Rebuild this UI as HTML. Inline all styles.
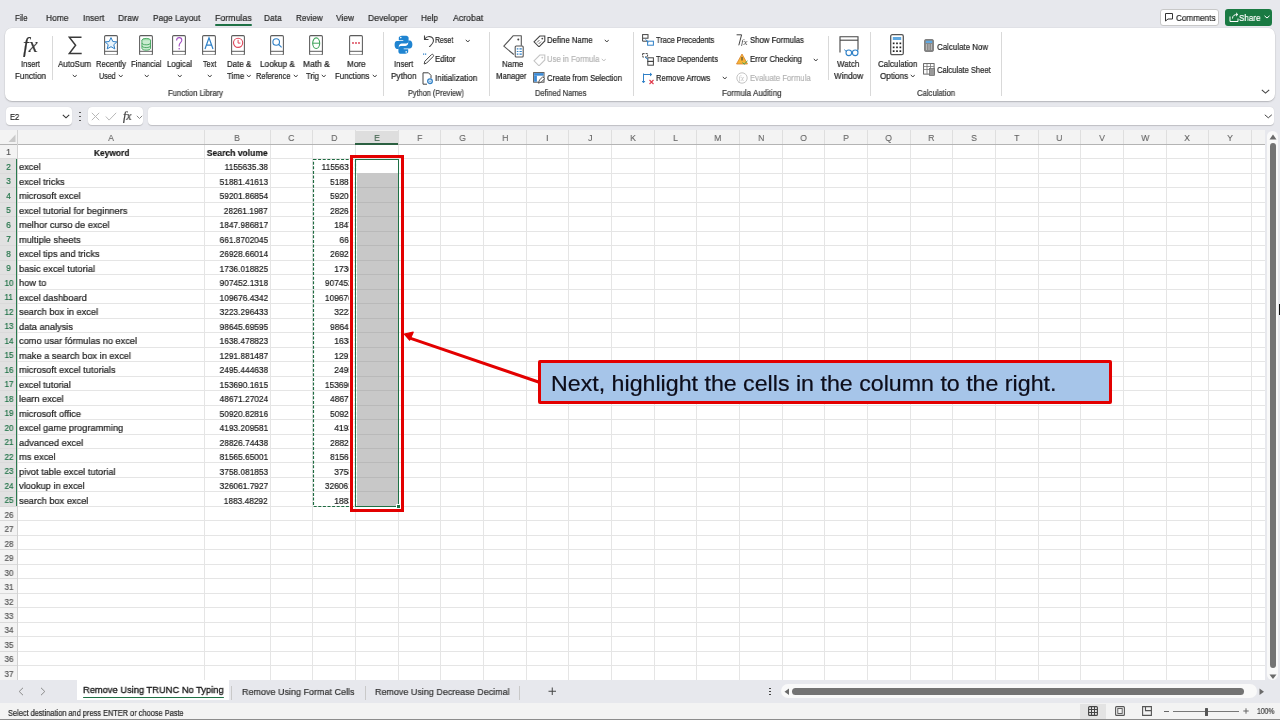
<!DOCTYPE html>
<html><head><meta charset="utf-8"><style>
html,body{margin:0;padding:0;width:1280px;height:720px;overflow:hidden;position:relative;background:#e9ebee}
body>div{position:absolute}
.t{position:absolute;white-space:pre;font-family:"Liberation Sans",sans-serif;will-change:transform;-webkit-text-stroke:0.22px currentColor}
</style></head><body>
<div style="left:0px;top:0px;width:1280px;height:720px;background:#e7e8ed"></div>
<div class="t" style="left:14.50px;top:13.36px;font-size:9.74px;line-height:9.74px;color:#2b2b2b;transform:scaleX(0.7966);transform-origin:0 0;">File</div>
<div class="t" style="left:45.60px;top:13.36px;font-size:9.74px;line-height:9.74px;color:#2b2b2b;transform:scaleX(0.8661);transform-origin:0 0;">Home</div>
<div class="t" style="left:82.50px;top:13.36px;font-size:9.74px;line-height:9.74px;color:#2b2b2b;transform:scaleX(0.8725);transform-origin:0 0;">Insert</div>
<div class="t" style="left:117.75px;top:13.36px;font-size:9.74px;line-height:9.74px;color:#2b2b2b;transform:scaleX(0.8955);transform-origin:0 0;">Draw</div>
<div class="t" style="left:152.50px;top:13.36px;font-size:9.74px;line-height:9.74px;color:#2b2b2b;transform:scaleX(0.8649);transform-origin:0 0;">Page Layout</div>
<div class="t" style="left:214.50px;top:13.36px;font-size:9.74px;line-height:9.74px;color:#2b2b2b;transform:scaleX(0.9055);transform-origin:0 0;">Formulas</div>
<div class="t" style="left:264.20px;top:13.36px;font-size:9.74px;line-height:9.74px;color:#2b2b2b;transform:scaleX(0.8605);transform-origin:0 0;">Data</div>
<div class="t" style="left:296.25px;top:13.36px;font-size:9.74px;line-height:9.74px;color:#2b2b2b;transform:scaleX(0.8315);transform-origin:0 0;">Review</div>
<div class="t" style="left:336.00px;top:13.36px;font-size:9.74px;line-height:9.74px;color:#2b2b2b;transform:scaleX(0.8599);transform-origin:0 0;">View</div>
<div class="t" style="left:367.50px;top:13.36px;font-size:9.74px;line-height:9.74px;color:#2b2b2b;transform:scaleX(0.8876);transform-origin:0 0;">Developer</div>
<div class="t" style="left:421.00px;top:13.36px;font-size:9.74px;line-height:9.74px;color:#2b2b2b;transform:scaleX(0.8538);transform-origin:0 0;">Help</div>
<div class="t" style="left:452.90px;top:13.36px;font-size:9.74px;line-height:9.74px;color:#2b2b2b;transform:scaleX(0.8998);transform-origin:0 0;">Acrobat</div>
<div style="left:214.5px;top:24px;width:37px;height:2px;background:#1e7145;border-radius:1px"></div>
<div style="left:1159.7px;top:8.8px;width:59px;height:17px;background:#fff;border:1px solid #c8c8c8;border-radius:3px;box-sizing:border-box"></div>
<svg style="position:absolute;left:1164px;top:12px;" width="10" height="10" viewBox="0 0 10 10"><path d="M1.5 1.5h7v5.5h-4.5l-2.5 2v-2h0z" fill="none" stroke="#333" stroke-width="1"/></svg>
<div class="t" style="left:1175.50px;top:12.80px;font-size:9.45px;line-height:9.45px;color:#2b2b2b;transform:scaleX(0.8648);transform-origin:0 0;">Comments</div>
<div style="left:1225px;top:8.8px;width:47px;height:17px;background:#1a7a43;border-radius:3px"></div>
<svg style="position:absolute;left:1228px;top:11px;" width="12" height="12" viewBox="0 0 12 12"><path d="M2 5.5v5h8v-3" fill="none" stroke="#fff" stroke-width="1"/><path d="M4.5 7.5c0-3 2-4 5-4M8 1.8l1.8 1.7-1.8 1.7" fill="none" stroke="#fff" stroke-width="1"/></svg>
<div class="t" style="left:1239.00px;top:12.80px;font-size:9.45px;line-height:9.45px;color:#fff;transform:scaleX(0.8528);transform-origin:0 0;">Share</div>
<svg style="position:absolute;left:1264px;top:15px;" width="6" height="4" viewBox="0 0 6 4"><path d="M0.5 0.8l2.5 2.2 2.5-2.2" fill="none" stroke="#fff" stroke-width="1"/></svg>
<div style="left:5px;top:28px;width:1269.5px;height:73px;background:#fff;border-radius:7px;box-shadow:0 1px 1.5px rgba(0,0,0,0.2),0 0 0 0.5px rgba(0,0,0,0.05)"></div>
<div style="left:52.0px;top:36px;width:1px;height:44px;background:#d9d9d9"></div>
<div style="left:383.25px;top:32px;width:1px;height:64px;background:#d9d9d9"></div>
<div style="left:488.5px;top:32px;width:1px;height:64px;background:#d9d9d9"></div>
<div style="left:633.0px;top:32px;width:1px;height:64px;background:#d9d9d9"></div>
<div style="left:828.2px;top:36px;width:1px;height:44px;background:#d9d9d9"></div>
<div style="left:869.8px;top:32px;width:1px;height:64px;background:#d9d9d9"></div>
<div style="left:1001.1px;top:32px;width:1px;height:64px;background:#d9d9d9"></div>
<div class="t" style="left:22.60px;top:35.27px;font-size:20.35px;line-height:20.35px;color:#333;transform:scaleX(0.9919);transform-origin:0 0;font-family:'Liberation Serif',serif;font-style:italic;">fx</div>
<div class="t" style="left:20.80px;top:60.25px;font-size:9.16px;line-height:9.16px;color:#242424;transform:scaleX(0.8296);transform-origin:0 0;">Insert</div>
<div class="t" style="left:14.90px;top:71.65px;font-size:9.16px;line-height:9.16px;color:#242424;transform:scaleX(0.8827);transform-origin:0 0;">Function</div>
<svg style="position:absolute;left:67.5px;top:35.5px;" width="15" height="19" viewBox="0 0 15 19"><path d="M13.5 1.2H1.3L7.6 9.2 1.3 17.6h12.4" fill="none" stroke="#3a3a3a" stroke-width="1.5" stroke-linejoin="miter"/></svg>
<div class="t" style="left:58.00px;top:60.25px;font-size:9.16px;line-height:9.16px;color:#242424;transform:scaleX(0.8788);transform-origin:0 0;">AutoSum</div>
<svg style="position:absolute;left:71.9px;top:74.4px;" width="5" height="4" viewBox="0 0 5 4"><path d="M0.8 0.8l2.00 2.2 2.00-2.2" fill="none" stroke="#444" stroke-width="1"/></svg>
<svg style="position:absolute;left:104px;top:34.6px;" width="14" height="20.5" viewBox="0 0 14 20.5"><rect x="0.6" y="0.6" width="12.8" height="19.3" rx="1.1" fill="#fff" stroke="#5c5c5c" stroke-width="1.05"/><line x1="0.6" y1="16.3" x2="13.4" y2="16.3" stroke="#5c5c5c" stroke-width="1"/><path d="M7 2.6l1.8 3.9 4.1 0.4-3.1 2.8 1 4.2L7 11.7l-3.8 2.2 1-4.2-3.1-2.8 4.1-0.4z" fill="#eaf4fb" stroke="#2f80c7" stroke-width="1"/></svg>
<div class="t" style="left:96.00px;top:60.25px;font-size:9.16px;line-height:9.16px;color:#242424;transform:scaleX(0.8421);transform-origin:0 0;">Recently</div>
<div class="t" style="left:98.80px;top:71.65px;font-size:9.16px;line-height:9.16px;color:#242424;transform:scaleX(0.7765);transform-origin:0 0;">Used</div>
<svg style="position:absolute;left:118.1px;top:74.4px;" width="5" height="4" viewBox="0 0 5 4"><path d="M0.8 0.8l2.00 2.2 2.00-2.2" fill="none" stroke="#444" stroke-width="1"/></svg>
<svg style="position:absolute;left:139.1px;top:34.6px;" width="14" height="20.5" viewBox="0 0 14 20.5"><rect x="0.6" y="0.6" width="12.8" height="19.3" rx="1.1" fill="#fff" stroke="#5c5c5c" stroke-width="1.05"/><line x1="0.6" y1="16.3" x2="13.4" y2="16.3" stroke="#5c5c5c" stroke-width="1"/><ellipse cx="7.2" cy="5.2" rx="4.3" ry="1.8" fill="#9ddba8" stroke="#3fa35a" stroke-width="0.9"/><path d="M2.9 5.2v8.2c0 1 1.9 1.8 4.3 1.8s4.3-.8 4.3-1.8V5.2" fill="#c9ecd0" stroke="#3fa35a" stroke-width="0.9"/><path d="M2.9 8c0 1 1.9 1.8 4.3 1.8S11.5 9 11.5 8M2.9 10.8c0 1 1.9 1.8 4.3 1.8s4.3-.8 4.3-1.8" fill="none" stroke="#3fa35a" stroke-width="0.9"/></svg>
<div class="t" style="left:131.00px;top:60.25px;font-size:9.16px;line-height:9.16px;color:#242424;transform:scaleX(0.8377);transform-origin:0 0;">Financial</div>
<svg style="position:absolute;left:143.8px;top:74.4px;" width="5" height="4" viewBox="0 0 5 4"><path d="M0.8 0.8l2.00 2.2 2.00-2.2" fill="none" stroke="#444" stroke-width="1"/></svg>
<svg style="position:absolute;left:172px;top:34.6px;" width="14" height="20.5" viewBox="0 0 14 20.5"><rect x="0.6" y="0.6" width="12.8" height="19.3" rx="1.1" fill="#fff" stroke="#5c5c5c" stroke-width="1.05"/><line x1="0.6" y1="16.3" x2="13.4" y2="16.3" stroke="#5c5c5c" stroke-width="1"/><path d="M4.6 5.6c0-2 1.2-3 2.6-3s2.6 1 2.6 2.7c0 2.2-2.6 2.4-2.6 4.9v1.2" fill="none" stroke="#a34fc2" stroke-width="1.1"/><circle cx="7.2" cy="13.8" r="0.8" fill="#a34fc2"/></svg>
<div class="t" style="left:166.90px;top:60.25px;font-size:9.16px;line-height:9.16px;color:#242424;transform:scaleX(0.8615);transform-origin:0 0;">Logical</div>
<svg style="position:absolute;left:176.5px;top:74.4px;" width="5" height="4" viewBox="0 0 5 4"><path d="M0.8 0.8l2.00 2.2 2.00-2.2" fill="none" stroke="#444" stroke-width="1"/></svg>
<svg style="position:absolute;left:202px;top:34.6px;" width="14" height="20.5" viewBox="0 0 14 20.5"><rect x="0.6" y="0.6" width="12.8" height="19.3" rx="1.1" fill="#fff" stroke="#5c5c5c" stroke-width="1.05"/><line x1="0.6" y1="16.3" x2="13.4" y2="16.3" stroke="#5c5c5c" stroke-width="1"/><path d="M3 14L7 2.8 11 14M4.4 10.2h5.2" fill="none" stroke="#2f80c7" stroke-width="1.2"/></svg>
<div class="t" style="left:202.50px;top:60.25px;font-size:9.16px;line-height:9.16px;color:#242424;transform:scaleX(0.7920);transform-origin:0 0;">Text</div>
<svg style="position:absolute;left:206.5px;top:74.4px;" width="5" height="4" viewBox="0 0 5 4"><path d="M0.8 0.8l2.00 2.2 2.00-2.2" fill="none" stroke="#444" stroke-width="1"/></svg>
<svg style="position:absolute;left:231.4px;top:34.6px;" width="14" height="20.5" viewBox="0 0 14 20.5"><rect x="0.6" y="0.6" width="12.8" height="19.3" rx="1.1" fill="#fff" stroke="#5c5c5c" stroke-width="1.05"/><line x1="0.6" y1="16.3" x2="13.4" y2="16.3" stroke="#5c5c5c" stroke-width="1"/><circle cx="7.1" cy="7.8" r="4.6" fill="none" stroke="#e0475a" stroke-width="1.1"/><path d="M7.1 4.8v3.3h2.3" fill="none" stroke="#e0475a" stroke-width="1"/></svg>
<div class="t" style="left:226.70px;top:60.25px;font-size:9.16px;line-height:9.16px;color:#242424;transform:scaleX(0.8645);transform-origin:0 0;">Date &amp;</div>
<div class="t" style="left:226.70px;top:71.65px;font-size:9.16px;line-height:9.16px;color:#242424;transform:scaleX(0.8596);transform-origin:0 0;">Time</div>
<svg style="position:absolute;left:245.6px;top:74.4px;" width="5" height="4" viewBox="0 0 5 4"><path d="M0.8 0.8l2.00 2.2 2.00-2.2" fill="none" stroke="#444" stroke-width="1"/></svg>
<svg style="position:absolute;left:270px;top:34.6px;" width="14" height="20.5" viewBox="0 0 14 20.5"><rect x="0.6" y="0.6" width="12.8" height="19.3" rx="1.1" fill="#fff" stroke="#5c5c5c" stroke-width="1.05"/><line x1="0.6" y1="16.3" x2="13.4" y2="16.3" stroke="#5c5c5c" stroke-width="1"/><circle cx="6.2" cy="7" r="3.3" fill="none" stroke="#2f80c7" stroke-width="1.1"/><path d="M8.6 9.4l3 3" stroke="#2f80c7" stroke-width="1.2"/></svg>
<div class="t" style="left:259.50px;top:60.25px;font-size:9.16px;line-height:9.16px;color:#242424;transform:scaleX(0.9020);transform-origin:0 0;">Lookup &amp;</div>
<div class="t" style="left:256.40px;top:71.65px;font-size:9.16px;line-height:9.16px;color:#242424;transform:scaleX(0.8142);transform-origin:0 0;">Reference</div>
<svg style="position:absolute;left:293.0px;top:74.4px;" width="5" height="4" viewBox="0 0 5 4"><path d="M0.8 0.8l2.00 2.2 2.00-2.2" fill="none" stroke="#444" stroke-width="1"/></svg>
<svg style="position:absolute;left:309.2px;top:34.6px;" width="14" height="20.5" viewBox="0 0 14 20.5"><rect x="0.6" y="0.6" width="12.8" height="19.3" rx="1.1" fill="#fff" stroke="#5c5c5c" stroke-width="1.05"/><line x1="0.6" y1="16.3" x2="13.4" y2="16.3" stroke="#5c5c5c" stroke-width="1"/><ellipse cx="7.2" cy="8.2" rx="3.5" ry="5.3" fill="none" stroke="#3fa35a" stroke-width="1.1"/><path d="M3.7 8.2h7" stroke="#3fa35a" stroke-width="1"/></svg>
<div class="t" style="left:302.80px;top:60.25px;font-size:9.16px;line-height:9.16px;color:#242424;transform:scaleX(0.9204);transform-origin:0 0;">Math &amp;</div>
<div class="t" style="left:306.40px;top:71.65px;font-size:9.16px;line-height:9.16px;color:#242424;transform:scaleX(0.8425);transform-origin:0 0;">Trig</div>
<svg style="position:absolute;left:321.1px;top:74.4px;" width="5" height="4" viewBox="0 0 5 4"><path d="M0.8 0.8l2.00 2.2 2.00-2.2" fill="none" stroke="#444" stroke-width="1"/></svg>
<svg style="position:absolute;left:348.6px;top:34.6px;" width="14" height="20.5" viewBox="0 0 14 20.5"><rect x="0.6" y="0.6" width="12.8" height="19.3" rx="1.1" fill="#fff" stroke="#5c5c5c" stroke-width="1.05"/><line x1="0.6" y1="16.3" x2="13.4" y2="16.3" stroke="#5c5c5c" stroke-width="1"/><circle cx="4" cy="8" r="0.9" fill="#d9364a"/><circle cx="7" cy="8" r="0.9" fill="#d9364a"/><circle cx="10" cy="8" r="0.9" fill="#d9364a"/></svg>
<div class="t" style="left:346.70px;top:60.25px;font-size:9.16px;line-height:9.16px;color:#242424;transform:scaleX(0.8915);transform-origin:0 0;">More</div>
<div class="t" style="left:335.00px;top:71.65px;font-size:9.16px;line-height:9.16px;color:#242424;transform:scaleX(0.8665);transform-origin:0 0;">Functions</div>
<svg style="position:absolute;left:371.5px;top:74.4px;" width="5" height="4" viewBox="0 0 5 4"><path d="M0.8 0.8l2.00 2.2 2.00-2.2" fill="none" stroke="#444" stroke-width="1"/></svg>
<div class="t" style="left:168.10px;top:90.45px;font-size:8.21px;line-height:8.21px;color:#3a3a3a;transform:scaleX(0.9341);transform-origin:0 0;">Function Library</div>
<svg style="position:absolute;left:393.5px;top:34.5px;" width="19" height="19.5" viewBox="0 0 19 19.5"><path d="M9.2 0.8c-4.2 0-4.4 1.8-4.4 1.8v2.6h4.5v0.8H3C1.4 6 0.6 7.6 0.6 9.9s1 4 2.5 4h1.7v-2.4c0-1.6 1.4-3 3-3h4.4c1.3 0 2.4-1.1 2.4-2.4V2.8c0-1.2-1.1-2-2.4-2.1z" fill="#1f84d1"/><circle cx="6.8" cy="2.6" r="0.8" fill="#fff"/><path d="M9.8 18.7c4.2 0 4.4-1.8 4.4-1.8v-2.6H9.7v-.8H16c1.6 0 2.4-1.6 2.4-3.9s-1-4-2.5-4h-1.7V8c0 1.6-1.4 3-3 3H6.8c-1.3 0-2.4 1.1-2.4 2.4v3.3c0 1.2 1.1 2 2.4 2.1z" fill="#1f84d1"/><circle cx="12.2" cy="16.9" r="0.8" fill="#fff"/></svg>
<div class="t" style="left:393.80px;top:60.25px;font-size:9.16px;line-height:9.16px;color:#242424;transform:scaleX(0.8427);transform-origin:0 0;">Insert</div>
<div class="t" style="left:390.60px;top:71.65px;font-size:9.16px;line-height:9.16px;color:#242424;transform:scaleX(0.8980);transform-origin:0 0;">Python</div>
<svg style="position:absolute;left:421.5px;top:34px;" width="13" height="13" viewBox="0 0 13 13"><path d="M2.5 1.5v4h4" fill="none" stroke="#444" stroke-width="1.1"/><path d="M2.6 5.2C4 3.3 5.8 2.4 7.6 2.6c2.4.3 4 2.3 3.8 4.6-.2 1.6-1.2 2.8-3 4.6l-1.2 1.1" fill="none" stroke="#444" stroke-width="1.1"/></svg>
<div class="t" style="left:435.25px;top:36.05px;font-size:9.16px;line-height:9.16px;color:#242424;transform:scaleX(0.7629);transform-origin:0 0;">Reset</div>
<svg style="position:absolute;left:465.2px;top:38.5px;" width="5" height="4" viewBox="0 0 5 4"><path d="M0.8 0.8l2.00 2.2 2.00-2.2" fill="none" stroke="#444" stroke-width="1"/></svg>
<svg style="position:absolute;left:421.5px;top:53px;" width="13" height="12" viewBox="0 0 13 12"><path d="M2.2 11l.6-2.7 6.6-6.6c.5-.5 1.3-.5 1.8 0s.5 1.3 0 1.8L4.6 10.1z" fill="none" stroke="#444" stroke-width="1"/><path d="M1 1.2h1.2M3 1.2h1.2" stroke="#2f80c7" stroke-width="1.2"/></svg>
<div class="t" style="left:435.25px;top:54.85px;font-size:9.16px;line-height:9.16px;color:#242424;transform:scaleX(0.8570);transform-origin:0 0;">Editor</div>
<svg style="position:absolute;left:422px;top:71.5px;" width="12" height="13" viewBox="0 0 12 13"><path d="M1 .8h5.5l2.5 2.6v3M1 .8v11.4h4" fill="none" stroke="#444" stroke-width="1"/><circle cx="8" cy="9.2" r="2.3" fill="none" stroke="#2f80c7" stroke-width="1.3"/><circle cx="8" cy="9.2" r="0.7" fill="#2f80c7"/></svg>
<div class="t" style="left:435.25px;top:73.55px;font-size:9.16px;line-height:9.16px;color:#242424;transform:scaleX(0.8830);transform-origin:0 0;">Initialization</div>
<div class="t" style="left:408.40px;top:90.45px;font-size:8.21px;line-height:8.21px;color:#3a3a3a;transform:scaleX(0.8940);transform-origin:0 0;">Python (Preview)</div>
<svg style="position:absolute;left:502.5px;top:33.5px;" width="21" height="24" viewBox="0 0 21 24"><path d="M10.8 20.5L0.8 12.2 10.3 1.7h8v10" fill="none" stroke="#555" stroke-width="1.1" stroke-linejoin="round"/><circle cx="15.3" cy="5.4" r="1" fill="#444"/><rect x="12.2" y="12" width="8" height="11" rx="1" fill="#fff" stroke="#555" stroke-width="1.1"/><path d="M13.8 14.8h1.6M16.5 14.8h2.3M13.8 17.5h1.6M16.5 17.5h2.3M13.8 20.2h1.6M16.5 20.2h2.3" stroke="#2f80c7" stroke-width="1.2"/></svg>
<div class="t" style="left:501.50px;top:60.25px;font-size:9.16px;line-height:9.16px;color:#242424;transform:scaleX(0.8720);transform-origin:0 0;">Name</div>
<div class="t" style="left:496.20px;top:71.65px;font-size:9.16px;line-height:9.16px;color:#242424;transform:scaleX(0.8439);transform-origin:0 0;">Manager</div>
<svg style="position:absolute;left:533px;top:34.5px;" width="13" height="12" viewBox="0 0 13 12"><path d="M1 6.8l5.8-5.8h5v5l-5.8 5.8z" fill="none" stroke="#444" stroke-width="1.1"/><circle cx="9.3" cy="3.6" r="0.9" fill="#444"/><path d="M4 7.5l2.5-2.5M5.6 9l2.4-2.4" stroke="#444" stroke-width="0.8"/></svg>
<div class="t" style="left:547.00px;top:36.05px;font-size:9.16px;line-height:9.16px;color:#242424;transform:scaleX(0.8552);transform-origin:0 0;">Define Name</div>
<svg style="position:absolute;left:603.5px;top:38.5px;" width="5" height="4" viewBox="0 0 5 4"><path d="M0.8 0.8l2.00 2.2 2.00-2.2" fill="none" stroke="#444" stroke-width="1"/></svg>
<svg style="position:absolute;left:533px;top:53.5px;" width="13" height="12" viewBox="0 0 13 12"><path d="M1 6.8l5.8-5.8h5v5l-5.8 5.8z" fill="none" stroke="#c4c4c4" stroke-width="1.1"/><circle cx="9.3" cy="3.6" r="0.9" fill="#c4c4c4"/></svg>
<div class="t" style="left:547.00px;top:54.85px;font-size:9.16px;line-height:9.16px;color:#b4b4b4;transform:scaleX(0.8440);transform-origin:0 0;">Use in Formula</div>
<svg style="position:absolute;left:600.9px;top:57.5px;" width="5" height="4" viewBox="0 0 5 4"><path d="M0.8 0.8l2.00 2.2 2.00-2.2" fill="none" stroke="#c0c0c0" stroke-width="1"/></svg>
<svg style="position:absolute;left:532.5px;top:71.5px;" width="12" height="12" viewBox="0 0 12 12"><rect x="0.6" y="0.6" width="10.4" height="9.6" fill="#fff" stroke="#555" stroke-width="1"/><rect x="1.1" y="1.1" width="9.4" height="2.6" fill="#3b8ad6"/><rect x="1.1" y="3.7" width="2.8" height="6" fill="#3b8ad6"/><path d="M5.5 11.2l1-3.2 3.2-3.2 1.9 1.9-3.2 3.2z" fill="#fff" stroke="#444" stroke-width="0.9"/></svg>
<div class="t" style="left:547.00px;top:73.55px;font-size:9.16px;line-height:9.16px;color:#242424;transform:scaleX(0.8469);transform-origin:0 0;">Create from Selection</div>
<div class="t" style="left:535.40px;top:90.45px;font-size:8.21px;line-height:8.21px;color:#3a3a3a;transform:scaleX(0.9081);transform-origin:0 0;">Defined Names</div>
<svg style="position:absolute;left:641.5px;top:34px;" width="12" height="12" viewBox="0 0 12 12"><rect x="0.6" y="0.6" width="5.4" height="3.6" fill="none" stroke="#444" stroke-width="1"/><path d="M0.6 4.2v3h5" fill="none" stroke="#444" stroke-width="1"/><rect x="5.6" y="7.2" width="5.8" height="4" fill="none" stroke="#2f80c7" stroke-width="1"/><path d="M3.5 5.5l3 2.6" stroke="#2f80c7" stroke-width="1"/></svg>
<div class="t" style="left:656.00px;top:36.05px;font-size:9.16px;line-height:9.16px;color:#242424;transform:scaleX(0.8105);transform-origin:0 0;">Trace Precedents</div>
<svg style="position:absolute;left:641.5px;top:52.5px;" width="12" height="13" viewBox="0 0 12 13"><path d="M0.6 0.6h5v3.4h-5z" fill="none" stroke="#444" stroke-width="1" stroke-dasharray="2 1"/><rect x="5.8" y="4.8" width="5.6" height="3.6" fill="none" stroke="#444" stroke-width="1"/><rect x="5.8" y="8.4" width="5.6" height="3.8" fill="none" stroke="#444" stroke-width="1"/><path d="M3 4.2l3.2 2.4" stroke="#2f80c7" stroke-width="1"/></svg>
<div class="t" style="left:656.00px;top:54.85px;font-size:9.16px;line-height:9.16px;color:#242424;transform:scaleX(0.8267);transform-origin:0 0;">Trace Dependents</div>
<svg style="position:absolute;left:641.5px;top:71.5px;" width="13" height="13" viewBox="0 0 13 13"><path d="M1.5 1.5v9M1.5 2.5h8M8 1l1.8 1.5L8 4M0 9l1.5 1.8L3 9" fill="none" stroke="#2f80c7" stroke-width="1"/><path d="M7.5 8l4 4M11.5 8l-4 4" stroke="#e0384a" stroke-width="1.1"/></svg>
<div class="t" style="left:656.00px;top:73.55px;font-size:9.16px;line-height:9.16px;color:#242424;transform:scaleX(0.8387);transform-origin:0 0;">Remove Arrows</div>
<svg style="position:absolute;left:721.8px;top:75.9px;" width="5" height="4" viewBox="0 0 5 4"><path d="M0.8 0.8l2.00 2.2 2.00-2.2" fill="none" stroke="#444" stroke-width="1"/></svg>
<svg style="position:absolute;left:735.5px;top:34px;" width="13" height="12" viewBox="0 0 13 12"><path d="M0.6 0.8h5l-2.8 10.5" fill="none" stroke="#444" stroke-width="1"/><text x="5" y="10.5" font-family="Liberation Serif" font-style="italic" font-size="9" fill="#444">fx</text></svg>
<div class="t" style="left:749.80px;top:36.05px;font-size:9.16px;line-height:9.16px;color:#242424;transform:scaleX(0.8473);transform-origin:0 0;">Show Formulas</div>
<svg style="position:absolute;left:736px;top:52.5px;" width="13" height="12" viewBox="0 0 13 12"><path d="M6 1L11.5 11H0.5z" fill="#f5b335" stroke="#d9822b" stroke-width="0.8"/><path d="M6 4v3.5" stroke="#333" stroke-width="1"/><path d="M6.5 9.5l1.7 1.7 3.3-3.3" fill="none" stroke="#3fa35a" stroke-width="1"/></svg>
<div class="t" style="left:749.80px;top:54.85px;font-size:9.16px;line-height:9.16px;color:#242424;transform:scaleX(0.8482);transform-origin:0 0;">Error Checking</div>
<svg style="position:absolute;left:813.0px;top:57.5px;" width="5" height="4" viewBox="0 0 5 4"><path d="M0.8 0.8l2.00 2.2 2.00-2.2" fill="none" stroke="#444" stroke-width="1"/></svg>
<svg style="position:absolute;left:736px;top:71.5px;" width="12" height="12" viewBox="0 0 12 12"><circle cx="6" cy="6" r="5.2" fill="none" stroke="#c4c4c4" stroke-width="1"/><text x="2.6" y="8.8" font-family="Liberation Serif" font-style="italic" font-size="7.5" fill="#c0c0c0">fx</text></svg>
<div class="t" style="left:749.80px;top:73.55px;font-size:9.16px;line-height:9.16px;color:#b4b4b4;transform:scaleX(0.8444);transform-origin:0 0;">Evaluate Formula</div>
<div class="t" style="left:722.40px;top:90.45px;font-size:8.21px;line-height:8.21px;color:#3a3a3a;transform:scaleX(0.9672);transform-origin:0 0;">Formula Auditing</div>
<svg style="position:absolute;left:838.5px;top:36px;" width="21" height="21" viewBox="0 0 21 21"><path d="M1 16.5V0.8h18v13" fill="none" stroke="#444" stroke-width="1.1"/><path d="M1 4.2h18" stroke="#444" stroke-width="1.1"/><circle cx="9.8" cy="16.8" r="2.8" fill="#fff" stroke="#2f80c7" stroke-width="1.1"/><circle cx="16.2" cy="16.8" r="2.8" fill="#fff" stroke="#2f80c7" stroke-width="1.1"/><path d="M12.6 16.3h0.8M7 15.5l-1.5-2M19 15.5l-.5-2" stroke="#2f80c7" stroke-width="1"/></svg>
<div class="t" style="left:837.20px;top:60.25px;font-size:9.16px;line-height:9.16px;color:#242424;transform:scaleX(0.8707);transform-origin:0 0;">Watch</div>
<div class="t" style="left:834.10px;top:71.65px;font-size:9.16px;line-height:9.16px;color:#242424;transform:scaleX(0.8935);transform-origin:0 0;">Window</div>
<svg style="position:absolute;left:890px;top:34px;" width="14" height="21.5" viewBox="0 0 14 21.5"><rect x="0.7" y="0.7" width="12.6" height="20" rx="1.5" fill="#fff" stroke="#555" stroke-width="1.3"/><rect x="2.8" y="3" width="8.4" height="3" fill="#5fa8e0"/><g fill="#222"><rect x="2.8" y="8.5" width="1.7" height="1.7"/><rect x="6.15" y="8.5" width="1.7" height="1.7"/><rect x="9.5" y="8.5" width="1.7" height="1.7"/><rect x="2.8" y="12.5" width="1.7" height="1.7"/><rect x="6.15" y="12.5" width="1.7" height="1.7"/><rect x="9.5" y="12.5" width="1.7" height="1.7"/><rect x="2.8" y="16.3" width="1.7" height="1.7"/><rect x="6.15" y="16.3" width="1.7" height="1.7"/><rect x="9.5" y="16.3" width="1.7" height="1.7"/></g></svg>
<div class="t" style="left:877.50px;top:60.25px;font-size:9.16px;line-height:9.16px;color:#242424;transform:scaleX(0.8697);transform-origin:0 0;">Calculation</div>
<div class="t" style="left:880.00px;top:71.65px;font-size:9.16px;line-height:9.16px;color:#242424;transform:scaleX(0.8904);transform-origin:0 0;">Options</div>
<svg style="position:absolute;left:910.0px;top:74.4px;" width="5" height="4" viewBox="0 0 5 4"><path d="M0.8 0.8l2.00 2.2 2.00-2.2" fill="none" stroke="#444" stroke-width="1"/></svg>
<svg style="position:absolute;left:923.5px;top:39px;" width="10" height="13" viewBox="0 0 10 13"><rect x="0.6" y="0.6" width="8.8" height="11.8" rx="1" fill="#8a8a8a" stroke="#666" stroke-width="0.8"/><rect x="1.8" y="1.8" width="6.4" height="2.2" fill="#5fa8e0"/><path d="M2.5 5.5v5.5M5 5.5v5.5M7.5 5.5v5.5" stroke="#fff" stroke-width="0.8" stroke-dasharray="1 1"/></svg>
<div class="t" style="left:936.90px;top:41.53px;font-size:9.88px;line-height:9.88px;color:#242424;transform:scaleX(0.8019);transform-origin:0 0;">Calculate Now</div>
<svg style="position:absolute;left:922.5px;top:62.5px;" width="12" height="13" viewBox="0 0 12 13"><rect x="0.6" y="0.6" width="10.5" height="10.5" fill="none" stroke="#555" stroke-width="0.9"/><path d="M0.6 3.5h10.5M0.6 6.5h10.5M4 0.6v10.5M7.5 0.6v10.5" stroke="#777" stroke-width="0.8"/><rect x="6.5" y="5.5" width="5" height="7" fill="#9a9a9a" stroke="#666" stroke-width="0.7"/></svg>
<div class="t" style="left:936.90px;top:64.83px;font-size:9.88px;line-height:9.88px;color:#242424;transform:scaleX(0.7696);transform-origin:0 0;">Calculate Sheet</div>
<div class="t" style="left:916.90px;top:90.45px;font-size:8.21px;line-height:8.21px;color:#3a3a3a;transform:scaleX(0.9378);transform-origin:0 0;">Calculation</div>
<svg style="position:absolute;left:1260.5px;top:88.5px;" width="9" height="5" viewBox="0 0 9 5"><path d="M0.8 0.8l3.7 3.3 3.7-3.3" fill="none" stroke="#444" stroke-width="1.1"/></svg>
<div style="left:6px;top:107px;width:66.2px;height:17.9px;background:#fff;border-radius:4px;box-shadow:0 0.6px 1px rgba(0,0,0,0.18)"></div>
<div class="t" style="left:10.20px;top:111.88px;font-size:9.88px;line-height:9.88px;color:#222;transform:scaleX(0.7693);transform-origin:0 0;">E2</div>
<svg style="position:absolute;left:62px;top:114px;" width="8" height="5" viewBox="0 0 8 5"><path d="M0.8 0.8l3.2 3 3.2-3" fill="none" stroke="#333" stroke-width="1.1"/></svg>
<div style="left:79.4px;top:112.2px;width:1.3px;height:1.3px;background:#555;border-radius:0.3px"></div>
<div style="left:79.4px;top:116.1px;width:1.3px;height:1.3px;background:#555;border-radius:0.3px"></div>
<div style="left:79.4px;top:120px;width:1.3px;height:1.3px;background:#555;border-radius:0.3px"></div>
<div style="left:87.5px;top:107px;width:55.5px;height:17.9px;background:#fff;border-radius:4px;box-shadow:0 0.6px 1px rgba(0,0,0,0.18)"></div>
<svg style="position:absolute;left:91px;top:111.5px;" width="9" height="9" viewBox="0 0 9 9"><path d="M0.8 0.8l7.4 7.4M8.2 0.8L0.8 8.2" stroke="#b8b8b8" stroke-width="1"/></svg>
<svg style="position:absolute;left:105px;top:111.5px;" width="12" height="9" viewBox="0 0 12 9"><path d="M0.8 4.5l3.3 3.6L11.2 0.8" fill="none" stroke="#b8b8b8" stroke-width="1"/></svg>
<div class="t" style="left:123.40px;top:110.04px;font-size:12.35px;line-height:12.35px;color:#333;transform:scaleX(0.9365);transform-origin:0 0;font-family:'Liberation Serif',serif;font-style:italic;">fx</div>
<svg style="position:absolute;left:135.5px;top:114.5px;" width="7" height="5" viewBox="0 0 7 5"><path d="M0.8 0.8l2.7 2.7 2.7-2.7" fill="none" stroke="#888" stroke-width="1"/></svg>
<div style="left:147.6px;top:107px;width:1126.4px;height:17.9px;background:#fff;border-radius:4px;box-shadow:0 0.6px 1px rgba(0,0,0,0.18)"></div>
<svg style="position:absolute;left:1264px;top:114px;" width="9" height="5" viewBox="0 0 9 5"><path d="M0.8 0.8l3.5 3 3.5-3" fill="none" stroke="#444" stroke-width="1"/></svg>
<div style="left:17px;top:144.3px;width:1248px;height:536px;background:#fff"></div>
<div style="left:0px;top:130px;width:1265px;height:14.3px;background:#f3f3f3"></div>
<div style="left:0px;top:144.3px;width:17px;height:536px;background:#f3f3f3"></div>
<div style="left:0px;top:158.78500000000003px;width:17px;height:347.64px;background:#e1e1e1"></div>
<div style="left:355.3px;top:130.5px;width:43.099999999999966px;height:13.8px;background:#dedede"></div>
<div style="left:204px;top:144.3px;width:1px;height:536px;background:#e5e5e5"></div>
<div style="left:204px;top:130px;width:1px;height:14.3px;background:#dedede"></div>
<div style="left:270px;top:144.3px;width:1px;height:536px;background:#e5e5e5"></div>
<div style="left:270px;top:130px;width:1px;height:14.3px;background:#dedede"></div>
<div style="left:312px;top:144.3px;width:1px;height:536px;background:#e5e5e5"></div>
<div style="left:312px;top:130px;width:1px;height:14.3px;background:#dedede"></div>
<div style="left:355px;top:144.3px;width:1px;height:536px;background:#e5e5e5"></div>
<div style="left:355px;top:130px;width:1px;height:14.3px;background:#dedede"></div>
<div style="left:398px;top:144.3px;width:1px;height:536px;background:#e5e5e5"></div>
<div style="left:398px;top:130px;width:1px;height:14.3px;background:#dedede"></div>
<div style="left:440px;top:144.3px;width:1px;height:536px;background:#e5e5e5"></div>
<div style="left:440px;top:130px;width:1px;height:14.3px;background:#dedede"></div>
<div style="left:483px;top:144.3px;width:1px;height:536px;background:#e5e5e5"></div>
<div style="left:483px;top:130px;width:1px;height:14.3px;background:#dedede"></div>
<div style="left:526px;top:144.3px;width:1px;height:536px;background:#e5e5e5"></div>
<div style="left:526px;top:130px;width:1px;height:14.3px;background:#dedede"></div>
<div style="left:568px;top:144.3px;width:1px;height:536px;background:#e5e5e5"></div>
<div style="left:568px;top:130px;width:1px;height:14.3px;background:#dedede"></div>
<div style="left:611px;top:144.3px;width:1px;height:536px;background:#e5e5e5"></div>
<div style="left:611px;top:130px;width:1px;height:14.3px;background:#dedede"></div>
<div style="left:654px;top:144.3px;width:1px;height:536px;background:#e5e5e5"></div>
<div style="left:654px;top:130px;width:1px;height:14.3px;background:#dedede"></div>
<div style="left:696px;top:144.3px;width:1px;height:536px;background:#e5e5e5"></div>
<div style="left:696px;top:130px;width:1px;height:14.3px;background:#dedede"></div>
<div style="left:739px;top:144.3px;width:1px;height:536px;background:#e5e5e5"></div>
<div style="left:739px;top:130px;width:1px;height:14.3px;background:#dedede"></div>
<div style="left:782px;top:144.3px;width:1px;height:536px;background:#e5e5e5"></div>
<div style="left:782px;top:130px;width:1px;height:14.3px;background:#dedede"></div>
<div style="left:824px;top:144.3px;width:1px;height:536px;background:#e5e5e5"></div>
<div style="left:824px;top:130px;width:1px;height:14.3px;background:#dedede"></div>
<div style="left:867px;top:144.3px;width:1px;height:536px;background:#e5e5e5"></div>
<div style="left:867px;top:130px;width:1px;height:14.3px;background:#dedede"></div>
<div style="left:910px;top:144.3px;width:1px;height:536px;background:#e5e5e5"></div>
<div style="left:910px;top:130px;width:1px;height:14.3px;background:#dedede"></div>
<div style="left:952px;top:144.3px;width:1px;height:536px;background:#e5e5e5"></div>
<div style="left:952px;top:130px;width:1px;height:14.3px;background:#dedede"></div>
<div style="left:995px;top:144.3px;width:1px;height:536px;background:#e5e5e5"></div>
<div style="left:995px;top:130px;width:1px;height:14.3px;background:#dedede"></div>
<div style="left:1038px;top:144.3px;width:1px;height:536px;background:#e5e5e5"></div>
<div style="left:1038px;top:130px;width:1px;height:14.3px;background:#dedede"></div>
<div style="left:1080px;top:144.3px;width:1px;height:536px;background:#e5e5e5"></div>
<div style="left:1080px;top:130px;width:1px;height:14.3px;background:#dedede"></div>
<div style="left:1123px;top:144.3px;width:1px;height:536px;background:#e5e5e5"></div>
<div style="left:1123px;top:130px;width:1px;height:14.3px;background:#dedede"></div>
<div style="left:1166px;top:144.3px;width:1px;height:536px;background:#e5e5e5"></div>
<div style="left:1166px;top:130px;width:1px;height:14.3px;background:#dedede"></div>
<div style="left:1208px;top:144.3px;width:1px;height:536px;background:#e5e5e5"></div>
<div style="left:1208px;top:130px;width:1px;height:14.3px;background:#dedede"></div>
<div style="left:1251px;top:144.3px;width:1px;height:536px;background:#e5e5e5"></div>
<div style="left:1251px;top:130px;width:1px;height:14.3px;background:#dedede"></div>
<div style="left:17px;top:158px;width:1248px;height:1px;background:#e5e5e5"></div>
<div style="left:0px;top:158px;width:17px;height:1px;background:#dadada"></div>
<div style="left:17px;top:173px;width:1248px;height:1px;background:#e5e5e5"></div>
<div style="left:0px;top:173px;width:17px;height:1px;background:#dadada"></div>
<div style="left:17px;top:187px;width:1248px;height:1px;background:#e5e5e5"></div>
<div style="left:0px;top:187px;width:17px;height:1px;background:#dadada"></div>
<div style="left:17px;top:202px;width:1248px;height:1px;background:#e5e5e5"></div>
<div style="left:0px;top:202px;width:17px;height:1px;background:#dadada"></div>
<div style="left:17px;top:216px;width:1248px;height:1px;background:#e5e5e5"></div>
<div style="left:0px;top:216px;width:17px;height:1px;background:#dadada"></div>
<div style="left:17px;top:231px;width:1248px;height:1px;background:#e5e5e5"></div>
<div style="left:0px;top:231px;width:17px;height:1px;background:#dadada"></div>
<div style="left:17px;top:245px;width:1248px;height:1px;background:#e5e5e5"></div>
<div style="left:0px;top:245px;width:17px;height:1px;background:#dadada"></div>
<div style="left:17px;top:260px;width:1248px;height:1px;background:#e5e5e5"></div>
<div style="left:0px;top:260px;width:17px;height:1px;background:#dadada"></div>
<div style="left:17px;top:274px;width:1248px;height:1px;background:#e5e5e5"></div>
<div style="left:0px;top:274px;width:17px;height:1px;background:#dadada"></div>
<div style="left:17px;top:289px;width:1248px;height:1px;background:#e5e5e5"></div>
<div style="left:0px;top:289px;width:17px;height:1px;background:#dadada"></div>
<div style="left:17px;top:303px;width:1248px;height:1px;background:#e5e5e5"></div>
<div style="left:0px;top:303px;width:17px;height:1px;background:#dadada"></div>
<div style="left:17px;top:318px;width:1248px;height:1px;background:#e5e5e5"></div>
<div style="left:0px;top:318px;width:17px;height:1px;background:#dadada"></div>
<div style="left:17px;top:332px;width:1248px;height:1px;background:#e5e5e5"></div>
<div style="left:0px;top:332px;width:17px;height:1px;background:#dadada"></div>
<div style="left:17px;top:347px;width:1248px;height:1px;background:#e5e5e5"></div>
<div style="left:0px;top:347px;width:17px;height:1px;background:#dadada"></div>
<div style="left:17px;top:361px;width:1248px;height:1px;background:#e5e5e5"></div>
<div style="left:0px;top:361px;width:17px;height:1px;background:#dadada"></div>
<div style="left:17px;top:376px;width:1248px;height:1px;background:#e5e5e5"></div>
<div style="left:0px;top:376px;width:17px;height:1px;background:#dadada"></div>
<div style="left:17px;top:390px;width:1248px;height:1px;background:#e5e5e5"></div>
<div style="left:0px;top:390px;width:17px;height:1px;background:#dadada"></div>
<div style="left:17px;top:405px;width:1248px;height:1px;background:#e5e5e5"></div>
<div style="left:0px;top:405px;width:17px;height:1px;background:#dadada"></div>
<div style="left:17px;top:419px;width:1248px;height:1px;background:#e5e5e5"></div>
<div style="left:0px;top:419px;width:17px;height:1px;background:#dadada"></div>
<div style="left:17px;top:434px;width:1248px;height:1px;background:#e5e5e5"></div>
<div style="left:0px;top:434px;width:17px;height:1px;background:#dadada"></div>
<div style="left:17px;top:448px;width:1248px;height:1px;background:#e5e5e5"></div>
<div style="left:0px;top:448px;width:17px;height:1px;background:#dadada"></div>
<div style="left:17px;top:462px;width:1248px;height:1px;background:#e5e5e5"></div>
<div style="left:0px;top:462px;width:17px;height:1px;background:#dadada"></div>
<div style="left:17px;top:477px;width:1248px;height:1px;background:#e5e5e5"></div>
<div style="left:0px;top:477px;width:17px;height:1px;background:#dadada"></div>
<div style="left:17px;top:491px;width:1248px;height:1px;background:#e5e5e5"></div>
<div style="left:0px;top:491px;width:17px;height:1px;background:#dadada"></div>
<div style="left:17px;top:506px;width:1248px;height:1px;background:#e5e5e5"></div>
<div style="left:0px;top:506px;width:17px;height:1px;background:#dadada"></div>
<div style="left:17px;top:520px;width:1248px;height:1px;background:#e5e5e5"></div>
<div style="left:0px;top:520px;width:17px;height:1px;background:#dadada"></div>
<div style="left:17px;top:535px;width:1248px;height:1px;background:#e5e5e5"></div>
<div style="left:0px;top:535px;width:17px;height:1px;background:#dadada"></div>
<div style="left:17px;top:549px;width:1248px;height:1px;background:#e5e5e5"></div>
<div style="left:0px;top:549px;width:17px;height:1px;background:#dadada"></div>
<div style="left:17px;top:564px;width:1248px;height:1px;background:#e5e5e5"></div>
<div style="left:0px;top:564px;width:17px;height:1px;background:#dadada"></div>
<div style="left:17px;top:578px;width:1248px;height:1px;background:#e5e5e5"></div>
<div style="left:0px;top:578px;width:17px;height:1px;background:#dadada"></div>
<div style="left:17px;top:593px;width:1248px;height:1px;background:#e5e5e5"></div>
<div style="left:0px;top:593px;width:17px;height:1px;background:#dadada"></div>
<div style="left:17px;top:607px;width:1248px;height:1px;background:#e5e5e5"></div>
<div style="left:0px;top:607px;width:17px;height:1px;background:#dadada"></div>
<div style="left:17px;top:622px;width:1248px;height:1px;background:#e5e5e5"></div>
<div style="left:0px;top:622px;width:17px;height:1px;background:#dadada"></div>
<div style="left:17px;top:636px;width:1248px;height:1px;background:#e5e5e5"></div>
<div style="left:0px;top:636px;width:17px;height:1px;background:#dadada"></div>
<div style="left:17px;top:651px;width:1248px;height:1px;background:#e5e5e5"></div>
<div style="left:0px;top:651px;width:17px;height:1px;background:#dadada"></div>
<div style="left:17px;top:665px;width:1248px;height:1px;background:#e5e5e5"></div>
<div style="left:0px;top:665px;width:17px;height:1px;background:#dadada"></div>
<div style="left:17px;top:680px;width:1248px;height:1px;background:#e5e5e5"></div>
<div style="left:0px;top:680px;width:17px;height:1px;background:#dadada"></div>
<div style="left:0px;top:144px;width:1265px;height:1px;background:#b4b4b4"></div>
<div style="left:16.5px;top:130px;width:1px;height:551px;background:#d2d2d2"></div>
<svg style="position:absolute;left:7.5px;top:133.5px;" width="8" height="8.5" viewBox="0 0 8 8.5"><path d="M7.5 0.5V8H0.5z" fill="#c9c9c9"/></svg>
<div class="t" style="left:107.75px;top:133.65px;font-size:9.16px;line-height:9.16px;color:#5e5e5e;transform:scaleX(0.9200);transform-origin:50% 0;-webkit-text-stroke:0.1px currentColor;">A</div>
<div class="t" style="left:234.35px;top:133.65px;font-size:9.16px;line-height:9.16px;color:#5e5e5e;transform:scaleX(0.9200);transform-origin:50% 0;-webkit-text-stroke:0.1px currentColor;">B</div>
<div class="t" style="left:288.24px;top:133.65px;font-size:9.16px;line-height:9.16px;color:#5e5e5e;transform:scaleX(0.9200);transform-origin:50% 0;-webkit-text-stroke:0.1px currentColor;">C</div>
<div class="t" style="left:330.79px;top:133.65px;font-size:9.16px;line-height:9.16px;color:#5e5e5e;transform:scaleX(0.9200);transform-origin:50% 0;-webkit-text-stroke:0.1px currentColor;">D</div>
<div class="t" style="left:373.80px;top:133.65px;font-size:9.16px;line-height:9.16px;color:#365a43;transform:scaleX(0.9200);transform-origin:50% 0;-webkit-text-stroke:0.1px currentColor;">E</div>
<div class="t" style="left:416.80px;top:133.65px;font-size:9.16px;line-height:9.16px;color:#5e5e5e;transform:scaleX(0.9200);transform-origin:50% 0;-webkit-text-stroke:0.1px currentColor;">F</div>
<div class="t" style="left:458.57px;top:133.65px;font-size:9.16px;line-height:9.16px;color:#5e5e5e;transform:scaleX(0.9200);transform-origin:50% 0;-webkit-text-stroke:0.1px currentColor;">G</div>
<div class="t" style="left:501.50px;top:133.65px;font-size:9.16px;line-height:9.16px;color:#5e5e5e;transform:scaleX(0.9200);transform-origin:50% 0;-webkit-text-stroke:0.1px currentColor;">H</div>
<div class="t" style="left:546.20px;top:133.65px;font-size:9.16px;line-height:9.16px;color:#5e5e5e;transform:scaleX(0.9200);transform-origin:50% 0;-webkit-text-stroke:0.1px currentColor;">I</div>
<div class="t" style="left:587.86px;top:133.65px;font-size:9.16px;line-height:9.16px;color:#5e5e5e;transform:scaleX(0.9200);transform-origin:50% 0;-webkit-text-stroke:0.1px currentColor;">J</div>
<div class="t" style="left:629.76px;top:133.65px;font-size:9.16px;line-height:9.16px;color:#5e5e5e;transform:scaleX(0.9200);transform-origin:50% 0;-webkit-text-stroke:0.1px currentColor;">K</div>
<div class="t" style="left:672.94px;top:133.65px;font-size:9.16px;line-height:9.16px;color:#5e5e5e;transform:scaleX(0.9200);transform-origin:50% 0;-webkit-text-stroke:0.1px currentColor;">L</div>
<div class="t" style="left:714.34px;top:133.65px;font-size:9.16px;line-height:9.16px;color:#5e5e5e;transform:scaleX(0.9200);transform-origin:50% 0;-webkit-text-stroke:0.1px currentColor;">M</div>
<div class="t" style="left:757.52px;top:133.65px;font-size:9.16px;line-height:9.16px;color:#5e5e5e;transform:scaleX(0.9200);transform-origin:50% 0;-webkit-text-stroke:0.1px currentColor;">N</div>
<div class="t" style="left:799.93px;top:133.65px;font-size:9.16px;line-height:9.16px;color:#5e5e5e;transform:scaleX(0.9200);transform-origin:50% 0;-webkit-text-stroke:0.1px currentColor;">O</div>
<div class="t" style="left:843.11px;top:133.65px;font-size:9.16px;line-height:9.16px;color:#5e5e5e;transform:scaleX(0.9200);transform-origin:50% 0;-webkit-text-stroke:0.1px currentColor;">P</div>
<div class="t" style="left:885.27px;top:133.65px;font-size:9.16px;line-height:9.16px;color:#5e5e5e;transform:scaleX(0.9200);transform-origin:50% 0;-webkit-text-stroke:0.1px currentColor;">Q</div>
<div class="t" style="left:928.20px;top:133.65px;font-size:9.16px;line-height:9.16px;color:#5e5e5e;transform:scaleX(0.9200);transform-origin:50% 0;-webkit-text-stroke:0.1px currentColor;">R</div>
<div class="t" style="left:971.12px;top:133.65px;font-size:9.16px;line-height:9.16px;color:#5e5e5e;transform:scaleX(0.9200);transform-origin:50% 0;-webkit-text-stroke:0.1px currentColor;">S</div>
<div class="t" style="left:1014.05px;top:133.65px;font-size:9.16px;line-height:9.16px;color:#5e5e5e;transform:scaleX(0.9200);transform-origin:50% 0;-webkit-text-stroke:0.1px currentColor;">T</div>
<div class="t" style="left:1056.21px;top:133.65px;font-size:9.16px;line-height:9.16px;color:#5e5e5e;transform:scaleX(0.9200);transform-origin:50% 0;-webkit-text-stroke:0.1px currentColor;">U</div>
<div class="t" style="left:1099.13px;top:133.65px;font-size:9.16px;line-height:9.16px;color:#5e5e5e;transform:scaleX(0.9200);transform-origin:50% 0;-webkit-text-stroke:0.1px currentColor;">V</div>
<div class="t" style="left:1140.53px;top:133.65px;font-size:9.16px;line-height:9.16px;color:#5e5e5e;transform:scaleX(0.9200);transform-origin:50% 0;-webkit-text-stroke:0.1px currentColor;">W</div>
<div class="t" style="left:1184.47px;top:133.65px;font-size:9.16px;line-height:9.16px;color:#5e5e5e;transform:scaleX(0.9200);transform-origin:50% 0;-webkit-text-stroke:0.1px currentColor;">X</div>
<div class="t" style="left:1227.14px;top:133.65px;font-size:9.16px;line-height:9.16px;color:#5e5e5e;transform:scaleX(0.9200);transform-origin:50% 0;-webkit-text-stroke:0.1px currentColor;">Y</div>
<div style="left:355.3px;top:143px;width:43.099999999999966px;height:2px;background:#2b6041"></div>
<div class="t" style="left:6.19px;top:148.47px;font-size:9.01px;line-height:9.01px;color:#555;transform:scaleX(0.8800);transform-origin:50% 0;">1</div>
<div class="t" style="left:6.19px;top:162.96px;font-size:9.01px;line-height:9.01px;color:#1e7145;transform:scaleX(0.8800);transform-origin:50% 0;">2</div>
<div class="t" style="left:6.19px;top:177.44px;font-size:9.01px;line-height:9.01px;color:#1e7145;transform:scaleX(0.8800);transform-origin:50% 0;">3</div>
<div class="t" style="left:6.19px;top:191.93px;font-size:9.01px;line-height:9.01px;color:#1e7145;transform:scaleX(0.8800);transform-origin:50% 0;">4</div>
<div class="t" style="left:6.19px;top:206.41px;font-size:9.01px;line-height:9.01px;color:#1e7145;transform:scaleX(0.8800);transform-origin:50% 0;">5</div>
<div class="t" style="left:6.19px;top:220.90px;font-size:9.01px;line-height:9.01px;color:#1e7145;transform:scaleX(0.8800);transform-origin:50% 0;">6</div>
<div class="t" style="left:6.19px;top:235.38px;font-size:9.01px;line-height:9.01px;color:#1e7145;transform:scaleX(0.8800);transform-origin:50% 0;">7</div>
<div class="t" style="left:6.19px;top:249.87px;font-size:9.01px;line-height:9.01px;color:#1e7145;transform:scaleX(0.8800);transform-origin:50% 0;">8</div>
<div class="t" style="left:6.19px;top:264.35px;font-size:9.01px;line-height:9.01px;color:#1e7145;transform:scaleX(0.8800);transform-origin:50% 0;">9</div>
<div class="t" style="left:3.69px;top:278.84px;font-size:9.01px;line-height:9.01px;color:#1e7145;transform:scaleX(0.8800);transform-origin:50% 0;">10</div>
<div class="t" style="left:4.02px;top:293.32px;font-size:9.01px;line-height:9.01px;color:#1e7145;transform:scaleX(0.8800);transform-origin:50% 0;">11</div>
<div class="t" style="left:3.69px;top:307.81px;font-size:9.01px;line-height:9.01px;color:#1e7145;transform:scaleX(0.8800);transform-origin:50% 0;">12</div>
<div class="t" style="left:3.69px;top:322.29px;font-size:9.01px;line-height:9.01px;color:#1e7145;transform:scaleX(0.8800);transform-origin:50% 0;">13</div>
<div class="t" style="left:3.69px;top:336.78px;font-size:9.01px;line-height:9.01px;color:#1e7145;transform:scaleX(0.8800);transform-origin:50% 0;">14</div>
<div class="t" style="left:3.69px;top:351.26px;font-size:9.01px;line-height:9.01px;color:#1e7145;transform:scaleX(0.8800);transform-origin:50% 0;">15</div>
<div class="t" style="left:3.69px;top:365.75px;font-size:9.01px;line-height:9.01px;color:#1e7145;transform:scaleX(0.8800);transform-origin:50% 0;">16</div>
<div class="t" style="left:3.69px;top:380.23px;font-size:9.01px;line-height:9.01px;color:#1e7145;transform:scaleX(0.8800);transform-origin:50% 0;">17</div>
<div class="t" style="left:3.69px;top:394.72px;font-size:9.01px;line-height:9.01px;color:#1e7145;transform:scaleX(0.8800);transform-origin:50% 0;">18</div>
<div class="t" style="left:3.69px;top:409.20px;font-size:9.01px;line-height:9.01px;color:#1e7145;transform:scaleX(0.8800);transform-origin:50% 0;">19</div>
<div class="t" style="left:3.69px;top:423.69px;font-size:9.01px;line-height:9.01px;color:#1e7145;transform:scaleX(0.8800);transform-origin:50% 0;">20</div>
<div class="t" style="left:3.69px;top:438.17px;font-size:9.01px;line-height:9.01px;color:#1e7145;transform:scaleX(0.8800);transform-origin:50% 0;">21</div>
<div class="t" style="left:3.69px;top:452.66px;font-size:9.01px;line-height:9.01px;color:#1e7145;transform:scaleX(0.8800);transform-origin:50% 0;">22</div>
<div class="t" style="left:3.69px;top:467.14px;font-size:9.01px;line-height:9.01px;color:#1e7145;transform:scaleX(0.8800);transform-origin:50% 0;">23</div>
<div class="t" style="left:3.69px;top:481.63px;font-size:9.01px;line-height:9.01px;color:#1e7145;transform:scaleX(0.8800);transform-origin:50% 0;">24</div>
<div class="t" style="left:3.69px;top:496.11px;font-size:9.01px;line-height:9.01px;color:#1e7145;transform:scaleX(0.8800);transform-origin:50% 0;">25</div>
<div class="t" style="left:3.69px;top:510.60px;font-size:9.01px;line-height:9.01px;color:#555;transform:scaleX(0.8800);transform-origin:50% 0;">26</div>
<div class="t" style="left:3.69px;top:525.08px;font-size:9.01px;line-height:9.01px;color:#555;transform:scaleX(0.8800);transform-origin:50% 0;">27</div>
<div class="t" style="left:3.69px;top:539.57px;font-size:9.01px;line-height:9.01px;color:#555;transform:scaleX(0.8800);transform-origin:50% 0;">28</div>
<div class="t" style="left:3.69px;top:554.05px;font-size:9.01px;line-height:9.01px;color:#555;transform:scaleX(0.8800);transform-origin:50% 0;">29</div>
<div class="t" style="left:3.69px;top:568.54px;font-size:9.01px;line-height:9.01px;color:#555;transform:scaleX(0.8800);transform-origin:50% 0;">30</div>
<div class="t" style="left:3.69px;top:583.02px;font-size:9.01px;line-height:9.01px;color:#555;transform:scaleX(0.8800);transform-origin:50% 0;">31</div>
<div class="t" style="left:3.69px;top:597.51px;font-size:9.01px;line-height:9.01px;color:#555;transform:scaleX(0.8800);transform-origin:50% 0;">32</div>
<div class="t" style="left:3.69px;top:611.99px;font-size:9.01px;line-height:9.01px;color:#555;transform:scaleX(0.8800);transform-origin:50% 0;">33</div>
<div class="t" style="left:3.69px;top:626.48px;font-size:9.01px;line-height:9.01px;color:#555;transform:scaleX(0.8800);transform-origin:50% 0;">34</div>
<div class="t" style="left:3.69px;top:640.96px;font-size:9.01px;line-height:9.01px;color:#555;transform:scaleX(0.8800);transform-origin:50% 0;">35</div>
<div class="t" style="left:3.69px;top:655.45px;font-size:9.01px;line-height:9.01px;color:#555;transform:scaleX(0.8800);transform-origin:50% 0;">36</div>
<div class="t" style="left:3.69px;top:669.93px;font-size:9.01px;line-height:9.01px;color:#555;transform:scaleX(0.8800);transform-origin:50% 0;">37</div>
<div style="left:16.2px;top:158.78500000000003px;width:1.3px;height:347.64px;background:#2a7a4e"></div>
<div class="t" style="left:90.68px;top:147.99px;font-size:9.81px;line-height:9.81px;color:#1a1a1a;font-weight:bold;transform:scaleX(0.8568);transform-origin:50% 0;">Keyword</div>
<div class="t" style="left:198.20px;top:147.99px;font-size:9.81px;line-height:9.81px;color:#1a1a1a;font-weight:bold;transform:scaleX(0.8739);transform-origin:100% 0;">Search volume</div>
<div style="left:356.5px;top:173.27px;width:41.099999999999966px;height:333.155px;background:#c8c8c8"></div>
<div style="left:356.5px;top:187px;width:41.099999999999966px;height:1px;background:#b9b9b9"></div>
<div style="left:356.5px;top:202px;width:41.099999999999966px;height:1px;background:#b9b9b9"></div>
<div style="left:356.5px;top:216px;width:41.099999999999966px;height:1px;background:#b9b9b9"></div>
<div style="left:356.5px;top:231px;width:41.099999999999966px;height:1px;background:#b9b9b9"></div>
<div style="left:356.5px;top:245px;width:41.099999999999966px;height:1px;background:#b9b9b9"></div>
<div style="left:356.5px;top:260px;width:41.099999999999966px;height:1px;background:#b9b9b9"></div>
<div style="left:356.5px;top:274px;width:41.099999999999966px;height:1px;background:#b9b9b9"></div>
<div style="left:356.5px;top:289px;width:41.099999999999966px;height:1px;background:#b9b9b9"></div>
<div style="left:356.5px;top:303px;width:41.099999999999966px;height:1px;background:#b9b9b9"></div>
<div style="left:356.5px;top:318px;width:41.099999999999966px;height:1px;background:#b9b9b9"></div>
<div style="left:356.5px;top:332px;width:41.099999999999966px;height:1px;background:#b9b9b9"></div>
<div style="left:356.5px;top:347px;width:41.099999999999966px;height:1px;background:#b9b9b9"></div>
<div style="left:356.5px;top:361px;width:41.099999999999966px;height:1px;background:#b9b9b9"></div>
<div style="left:356.5px;top:376px;width:41.099999999999966px;height:1px;background:#b9b9b9"></div>
<div style="left:356.5px;top:390px;width:41.099999999999966px;height:1px;background:#b9b9b9"></div>
<div style="left:356.5px;top:405px;width:41.099999999999966px;height:1px;background:#b9b9b9"></div>
<div style="left:356.5px;top:419px;width:41.099999999999966px;height:1px;background:#b9b9b9"></div>
<div style="left:356.5px;top:434px;width:41.099999999999966px;height:1px;background:#b9b9b9"></div>
<div style="left:356.5px;top:448px;width:41.099999999999966px;height:1px;background:#b9b9b9"></div>
<div style="left:356.5px;top:462px;width:41.099999999999966px;height:1px;background:#b9b9b9"></div>
<div style="left:356.5px;top:477px;width:41.099999999999966px;height:1px;background:#b9b9b9"></div>
<div style="left:356.5px;top:491px;width:41.099999999999966px;height:1px;background:#b9b9b9"></div>
<div style="left:356.5px;top:506px;width:41.099999999999966px;height:1px;background:#b9b9b9"></div>
<div class="t" style="left:18.80px;top:162.48px;font-size:9.81px;line-height:9.81px;color:#1c1c1c;transform:scaleX(0.9430);transform-origin:0 0;">excel</div>
<div class="t" style="left:216.89px;top:162.48px;font-size:9.81px;line-height:9.81px;color:#1c1c1c;transform:scaleX(0.8500);transform-origin:100% 0;">1155635.38</div>
<div class="t" style="left:315.73px;top:162.48px;font-size:9.81px;line-height:9.81px;color:#1c1c1c;transform:scaleX(0.8500);transform-origin:100% 0;">1155635</div>
<div class="t" style="left:18.80px;top:176.96px;font-size:9.81px;line-height:9.81px;color:#1c1c1c;transform:scaleX(0.9430);transform-origin:0 0;">excel tricks</div>
<div class="t" style="left:210.71px;top:176.96px;font-size:9.81px;line-height:9.81px;color:#1c1c1c;transform:scaleX(0.8500);transform-origin:100% 0;">51881.41613</div>
<div class="t" style="left:325.92px;top:176.96px;font-size:9.81px;line-height:9.81px;color:#1c1c1c;transform:scaleX(0.8500);transform-origin:100% 0;">51881</div>
<div class="t" style="left:18.80px;top:191.45px;font-size:9.81px;line-height:9.81px;color:#1c1c1c;transform:scaleX(0.9430);transform-origin:0 0;">microsoft excel</div>
<div class="t" style="left:210.71px;top:191.45px;font-size:9.81px;line-height:9.81px;color:#1c1c1c;transform:scaleX(0.8500);transform-origin:100% 0;">59201.86854</div>
<div class="t" style="left:325.92px;top:191.45px;font-size:9.81px;line-height:9.81px;color:#1c1c1c;transform:scaleX(0.8500);transform-origin:100% 0;">59201</div>
<div class="t" style="left:18.80px;top:205.93px;font-size:9.81px;line-height:9.81px;color:#1c1c1c;transform:scaleX(0.9430);transform-origin:0 0;">excel tutorial for beginners</div>
<div class="t" style="left:216.17px;top:205.93px;font-size:9.81px;line-height:9.81px;color:#1c1c1c;transform:scaleX(0.8500);transform-origin:100% 0;">28261.1987</div>
<div class="t" style="left:325.92px;top:205.93px;font-size:9.81px;line-height:9.81px;color:#1c1c1c;transform:scaleX(0.8500);transform-origin:100% 0;">28261</div>
<div class="t" style="left:18.80px;top:220.42px;font-size:9.81px;line-height:9.81px;color:#1c1c1c;transform:scaleX(0.9430);transform-origin:0 0;">melhor curso de excel</div>
<div class="t" style="left:210.71px;top:220.42px;font-size:9.81px;line-height:9.81px;color:#1c1c1c;transform:scaleX(0.8500);transform-origin:100% 0;">1847.986817</div>
<div class="t" style="left:331.37px;top:220.42px;font-size:9.81px;line-height:9.81px;color:#1c1c1c;transform:scaleX(0.8500);transform-origin:100% 0;">1847</div>
<div class="t" style="left:18.80px;top:234.90px;font-size:9.81px;line-height:9.81px;color:#1c1c1c;transform:scaleX(0.9430);transform-origin:0 0;">multiple sheets</div>
<div class="t" style="left:210.71px;top:234.90px;font-size:9.81px;line-height:9.81px;color:#1c1c1c;transform:scaleX(0.8500);transform-origin:100% 0;">661.8702045</div>
<div class="t" style="left:336.83px;top:234.90px;font-size:9.81px;line-height:9.81px;color:#1c1c1c;transform:scaleX(0.8500);transform-origin:100% 0;">661</div>
<div class="t" style="left:18.80px;top:249.39px;font-size:9.81px;line-height:9.81px;color:#1c1c1c;transform:scaleX(0.9430);transform-origin:0 0;">excel tips and tricks</div>
<div class="t" style="left:210.71px;top:249.39px;font-size:9.81px;line-height:9.81px;color:#1c1c1c;transform:scaleX(0.8500);transform-origin:100% 0;">26928.66014</div>
<div class="t" style="left:325.92px;top:249.39px;font-size:9.81px;line-height:9.81px;color:#1c1c1c;transform:scaleX(0.8500);transform-origin:100% 0;">26928</div>
<div class="t" style="left:18.80px;top:263.87px;font-size:9.81px;line-height:9.81px;color:#1c1c1c;transform:scaleX(0.9430);transform-origin:0 0;">basic excel tutorial</div>
<div class="t" style="left:210.71px;top:263.87px;font-size:9.81px;line-height:9.81px;color:#1c1c1c;transform:scaleX(0.8500);transform-origin:100% 0;">1736.018825</div>
<div class="t" style="left:331.37px;top:263.87px;font-size:9.81px;line-height:9.81px;color:#1c1c1c;transform:scaleX(0.8500);transform-origin:100% 0;">1736</div>
<div class="t" style="left:18.80px;top:278.36px;font-size:9.81px;line-height:9.81px;color:#1c1c1c;transform:scaleX(0.9430);transform-origin:0 0;">how to</div>
<div class="t" style="left:210.71px;top:278.36px;font-size:9.81px;line-height:9.81px;color:#1c1c1c;transform:scaleX(0.8500);transform-origin:100% 0;">907452.1318</div>
<div class="t" style="left:320.46px;top:278.36px;font-size:9.81px;line-height:9.81px;color:#1c1c1c;transform:scaleX(0.8500);transform-origin:100% 0;">907452</div>
<div class="t" style="left:18.80px;top:292.84px;font-size:9.81px;line-height:9.81px;color:#1c1c1c;transform:scaleX(0.9430);transform-origin:0 0;">excel dashboard</div>
<div class="t" style="left:210.71px;top:292.84px;font-size:9.81px;line-height:9.81px;color:#1c1c1c;transform:scaleX(0.8500);transform-origin:100% 0;">109676.4342</div>
<div class="t" style="left:320.46px;top:292.84px;font-size:9.81px;line-height:9.81px;color:#1c1c1c;transform:scaleX(0.8500);transform-origin:100% 0;">109676</div>
<div class="t" style="left:18.80px;top:307.33px;font-size:9.81px;line-height:9.81px;color:#1c1c1c;transform:scaleX(0.9430);transform-origin:0 0;">search box in excel</div>
<div class="t" style="left:210.71px;top:307.33px;font-size:9.81px;line-height:9.81px;color:#1c1c1c;transform:scaleX(0.8500);transform-origin:100% 0;">3223.296433</div>
<div class="t" style="left:331.37px;top:307.33px;font-size:9.81px;line-height:9.81px;color:#1c1c1c;transform:scaleX(0.8500);transform-origin:100% 0;">3223</div>
<div class="t" style="left:18.80px;top:321.81px;font-size:9.81px;line-height:9.81px;color:#1c1c1c;transform:scaleX(0.9430);transform-origin:0 0;">data analysis</div>
<div class="t" style="left:210.71px;top:321.81px;font-size:9.81px;line-height:9.81px;color:#1c1c1c;transform:scaleX(0.8500);transform-origin:100% 0;">98645.69595</div>
<div class="t" style="left:325.92px;top:321.81px;font-size:9.81px;line-height:9.81px;color:#1c1c1c;transform:scaleX(0.8500);transform-origin:100% 0;">98645</div>
<div class="t" style="left:18.80px;top:336.30px;font-size:9.81px;line-height:9.81px;color:#1c1c1c;transform:scaleX(0.9430);transform-origin:0 0;">como usar fórmulas no excel</div>
<div class="t" style="left:210.71px;top:336.30px;font-size:9.81px;line-height:9.81px;color:#1c1c1c;transform:scaleX(0.8500);transform-origin:100% 0;">1638.478823</div>
<div class="t" style="left:331.37px;top:336.30px;font-size:9.81px;line-height:9.81px;color:#1c1c1c;transform:scaleX(0.8500);transform-origin:100% 0;">1638</div>
<div class="t" style="left:18.80px;top:350.78px;font-size:9.81px;line-height:9.81px;color:#1c1c1c;transform:scaleX(0.9430);transform-origin:0 0;">make a search box in excel</div>
<div class="t" style="left:210.71px;top:350.78px;font-size:9.81px;line-height:9.81px;color:#1c1c1c;transform:scaleX(0.8500);transform-origin:100% 0;">1291.881487</div>
<div class="t" style="left:331.37px;top:350.78px;font-size:9.81px;line-height:9.81px;color:#1c1c1c;transform:scaleX(0.8500);transform-origin:100% 0;">1291</div>
<div class="t" style="left:18.80px;top:365.27px;font-size:9.81px;line-height:9.81px;color:#1c1c1c;transform:scaleX(0.9430);transform-origin:0 0;">microsoft excel tutorials</div>
<div class="t" style="left:210.71px;top:365.27px;font-size:9.81px;line-height:9.81px;color:#1c1c1c;transform:scaleX(0.8500);transform-origin:100% 0;">2495.444638</div>
<div class="t" style="left:331.37px;top:365.27px;font-size:9.81px;line-height:9.81px;color:#1c1c1c;transform:scaleX(0.8500);transform-origin:100% 0;">2495</div>
<div class="t" style="left:18.80px;top:379.75px;font-size:9.81px;line-height:9.81px;color:#1c1c1c;transform:scaleX(0.9430);transform-origin:0 0;">excel tutorial</div>
<div class="t" style="left:210.71px;top:379.75px;font-size:9.81px;line-height:9.81px;color:#1c1c1c;transform:scaleX(0.8500);transform-origin:100% 0;">153690.1615</div>
<div class="t" style="left:320.46px;top:379.75px;font-size:9.81px;line-height:9.81px;color:#1c1c1c;transform:scaleX(0.8500);transform-origin:100% 0;">153690</div>
<div class="t" style="left:18.80px;top:394.24px;font-size:9.81px;line-height:9.81px;color:#1c1c1c;transform:scaleX(0.9430);transform-origin:0 0;">learn excel</div>
<div class="t" style="left:210.71px;top:394.24px;font-size:9.81px;line-height:9.81px;color:#1c1c1c;transform:scaleX(0.8500);transform-origin:100% 0;">48671.27024</div>
<div class="t" style="left:325.92px;top:394.24px;font-size:9.81px;line-height:9.81px;color:#1c1c1c;transform:scaleX(0.8500);transform-origin:100% 0;">48671</div>
<div class="t" style="left:18.80px;top:408.72px;font-size:9.81px;line-height:9.81px;color:#1c1c1c;transform:scaleX(0.9430);transform-origin:0 0;">microsoft office</div>
<div class="t" style="left:210.71px;top:408.72px;font-size:9.81px;line-height:9.81px;color:#1c1c1c;transform:scaleX(0.8500);transform-origin:100% 0;">50920.82816</div>
<div class="t" style="left:325.92px;top:408.72px;font-size:9.81px;line-height:9.81px;color:#1c1c1c;transform:scaleX(0.8500);transform-origin:100% 0;">50920</div>
<div class="t" style="left:18.80px;top:423.21px;font-size:9.81px;line-height:9.81px;color:#1c1c1c;transform:scaleX(0.9430);transform-origin:0 0;">excel game programming</div>
<div class="t" style="left:210.71px;top:423.21px;font-size:9.81px;line-height:9.81px;color:#1c1c1c;transform:scaleX(0.8500);transform-origin:100% 0;">4193.209581</div>
<div class="t" style="left:331.37px;top:423.21px;font-size:9.81px;line-height:9.81px;color:#1c1c1c;transform:scaleX(0.8500);transform-origin:100% 0;">4193</div>
<div class="t" style="left:18.80px;top:437.69px;font-size:9.81px;line-height:9.81px;color:#1c1c1c;transform:scaleX(0.9430);transform-origin:0 0;">advanced excel</div>
<div class="t" style="left:210.71px;top:437.69px;font-size:9.81px;line-height:9.81px;color:#1c1c1c;transform:scaleX(0.8500);transform-origin:100% 0;">28826.74438</div>
<div class="t" style="left:325.92px;top:437.69px;font-size:9.81px;line-height:9.81px;color:#1c1c1c;transform:scaleX(0.8500);transform-origin:100% 0;">28826</div>
<div class="t" style="left:18.80px;top:452.18px;font-size:9.81px;line-height:9.81px;color:#1c1c1c;transform:scaleX(0.9430);transform-origin:0 0;">ms excel</div>
<div class="t" style="left:210.71px;top:452.18px;font-size:9.81px;line-height:9.81px;color:#1c1c1c;transform:scaleX(0.8500);transform-origin:100% 0;">81565.65001</div>
<div class="t" style="left:325.92px;top:452.18px;font-size:9.81px;line-height:9.81px;color:#1c1c1c;transform:scaleX(0.8500);transform-origin:100% 0;">81565</div>
<div class="t" style="left:18.80px;top:466.66px;font-size:9.81px;line-height:9.81px;color:#1c1c1c;transform:scaleX(0.9430);transform-origin:0 0;">pivot table excel tutorial</div>
<div class="t" style="left:210.71px;top:466.66px;font-size:9.81px;line-height:9.81px;color:#1c1c1c;transform:scaleX(0.8500);transform-origin:100% 0;">3758.081853</div>
<div class="t" style="left:331.37px;top:466.66px;font-size:9.81px;line-height:9.81px;color:#1c1c1c;transform:scaleX(0.8500);transform-origin:100% 0;">3758</div>
<div class="t" style="left:18.80px;top:481.15px;font-size:9.81px;line-height:9.81px;color:#1c1c1c;transform:scaleX(0.9430);transform-origin:0 0;">vlookup in excel</div>
<div class="t" style="left:210.71px;top:481.15px;font-size:9.81px;line-height:9.81px;color:#1c1c1c;transform:scaleX(0.8500);transform-origin:100% 0;">326061.7927</div>
<div class="t" style="left:320.46px;top:481.15px;font-size:9.81px;line-height:9.81px;color:#1c1c1c;transform:scaleX(0.8500);transform-origin:100% 0;">326061</div>
<div class="t" style="left:18.80px;top:495.63px;font-size:9.81px;line-height:9.81px;color:#1c1c1c;transform:scaleX(0.9430);transform-origin:0 0;">search box excel</div>
<div class="t" style="left:216.17px;top:495.63px;font-size:9.81px;line-height:9.81px;color:#1c1c1c;transform:scaleX(0.8500);transform-origin:100% 0;">1883.48292</div>
<div class="t" style="left:331.37px;top:495.63px;font-size:9.81px;line-height:9.81px;color:#1c1c1c;transform:scaleX(0.8500);transform-origin:100% 0;">1883</div>
<div style="left:348.9px;top:159px;width:2px;height:14px;background:#fff"></div>
<div style="left:348.9px;top:174px;width:2px;height:13px;background:#fff"></div>
<div style="left:348.9px;top:188px;width:2px;height:14px;background:#fff"></div>
<div style="left:348.9px;top:203px;width:2px;height:13px;background:#fff"></div>
<div style="left:348.9px;top:217px;width:2px;height:14px;background:#fff"></div>
<div style="left:348.9px;top:232px;width:2px;height:13px;background:#fff"></div>
<div style="left:348.9px;top:246px;width:2px;height:14px;background:#fff"></div>
<div style="left:348.9px;top:261px;width:2px;height:13px;background:#fff"></div>
<div style="left:348.9px;top:275px;width:2px;height:14px;background:#fff"></div>
<div style="left:348.9px;top:290px;width:2px;height:13px;background:#fff"></div>
<div style="left:348.9px;top:304px;width:2px;height:14px;background:#fff"></div>
<div style="left:348.9px;top:319px;width:2px;height:13px;background:#fff"></div>
<div style="left:348.9px;top:333px;width:2px;height:14px;background:#fff"></div>
<div style="left:348.9px;top:348px;width:2px;height:13px;background:#fff"></div>
<div style="left:348.9px;top:362px;width:2px;height:14px;background:#fff"></div>
<div style="left:348.9px;top:377px;width:2px;height:13px;background:#fff"></div>
<div style="left:348.9px;top:391px;width:2px;height:14px;background:#fff"></div>
<div style="left:348.9px;top:406px;width:2px;height:13px;background:#fff"></div>
<div style="left:348.9px;top:420px;width:2px;height:14px;background:#fff"></div>
<div style="left:348.9px;top:435px;width:2px;height:13px;background:#fff"></div>
<div style="left:348.9px;top:449px;width:2px;height:13px;background:#fff"></div>
<div style="left:348.9px;top:463px;width:2px;height:14px;background:#fff"></div>
<div style="left:348.9px;top:478px;width:2px;height:13px;background:#fff"></div>
<div style="left:348.9px;top:492px;width:2px;height:14px;background:#fff"></div>
<svg style="position:absolute;left:312px;top:158px;" width="46" height="352" viewBox="0 0 46 352"><rect x="1.5" y="1.5" width="42" height="347" fill="none" stroke="#1f6b41" stroke-width="1.15" stroke-dasharray="3 1.6"/></svg>
<div style="left:355.0px;top:159.18500000000003px;width:43.69999999999997px;height:347.64px;border:1.3px solid #1e7145;box-sizing:border-box"></div>
<div style="left:396.8px;top:504.8px;width:3.4px;height:3.4px;background:#1e7145;outline:0.7px solid #fff"></div>
<div style="left:350.1px;top:155.2px;width:53.5px;height:356.7px;border:3px solid #e30000;box-sizing:border-box"></div>
<svg style="position:absolute;left:395px;top:325px;" width="150" height="65" viewBox="0 0 150 65"><line x1="143.5" y1="57" x2="15" y2="13.2" stroke="#e30000" stroke-width="3"/><path d="M9.4 9L18.2 7.2 14.6 15.2z" fill="#e30000" stroke="#e30000" stroke-width="1.2" stroke-linejoin="round"/></svg>
<div style="left:538.25px;top:359.8px;width:573.25px;height:44.6px;background:#a6c5e9;border:3.3px solid #e30000;border-radius:2px;box-sizing:border-box"></div>
<div class="t" style="left:550.60px;top:371.98px;font-size:22.82px;line-height:22.82px;color:#0d0d1a;transform:scaleX(1.0168);transform-origin:0 0;">Next, highlight the cells in the column to the right.</div>
<div style="left:1265px;top:130px;width:15px;height:552px;background:#e7e8ed"></div>
<div style="left:1266.5px;top:131px;width:11.5px;height:549px;background:#f9f9f9;border-radius:6px"></div>
<svg style="position:absolute;left:1268.5px;top:134px;" width="8" height="6" viewBox="0 0 8 6"><path d="M4 0.5L7.5 5.5H0.5z" fill="#6a6a6a"/></svg>
<div style="left:1270px;top:143px;width:5.8px;height:525.3px;background:#737373;border-radius:3px"></div>
<svg style="position:absolute;left:1269px;top:674px;" width="8" height="5.5" viewBox="0 0 8 5.5"><path d="M4 5L7.5 0.5H0.5z" fill="#6a6a6a"/></svg>
<div style="left:1278.6px;top:303.8px;width:1.4px;height:11.6px;background:#111"></div>
<div style="left:0px;top:680.2px;width:1280px;height:22.6px;background:#e7e8ed"></div>
<svg style="position:absolute;left:17.5px;top:687px;" width="6" height="9" viewBox="0 0 6 9"><path d="M5 0.8L1.2 4.5 5 8.2" fill="none" stroke="#8a8a8a" stroke-width="1"/></svg>
<svg style="position:absolute;left:40px;top:687px;" width="6" height="9" viewBox="0 0 6 9"><path d="M1 0.8l3.8 3.7L1 8.2" fill="none" stroke="#8a8a8a" stroke-width="1"/></svg>
<div style="left:77px;top:680.2px;width:152px;height:20px;background:#fff"></div>
<div class="t" style="left:82.75px;top:685.43px;font-size:9.88px;line-height:9.88px;color:#1a1a1a;transform:scaleX(0.9440);transform-origin:0 0;-webkit-text-stroke:0.35px #1a1a1a;">Remove Using TRUNC No Typing</div>
<div style="left:82.5px;top:696.5px;width:141px;height:1.8px;background:#1e7145;border-radius:1px"></div>
<div style="left:231.2px;top:686px;width:1px;height:14px;background:#c9c9c9"></div>
<div class="t" style="left:242.20px;top:687.43px;font-size:9.88px;line-height:9.88px;color:#333;transform:scaleX(0.9111);transform-origin:0 0;">Remove Using Format Cells</div>
<div style="left:364.5px;top:686px;width:1px;height:14px;background:#c9c9c9"></div>
<div class="t" style="left:374.75px;top:687.43px;font-size:9.88px;line-height:9.88px;color:#333;transform:scaleX(0.9082);transform-origin:0 0;">Remove Using Decrease Decimal</div>
<div style="left:519px;top:686px;width:1px;height:14px;background:#c9c9c9"></div>
<svg style="position:absolute;left:547.5px;top:687px;" width="8.5" height="8.5" viewBox="0 0 8.5 8.5"><path d="M4.25 0.5v7.5M0.5 4.25h7.5" stroke="#444" stroke-width="1"/></svg>
<div style="left:769.2px;top:687.5px;width:1.6px;height:1.6px;background:#444"></div>
<div style="left:769.2px;top:690.5px;width:1.6px;height:1.6px;background:#444"></div>
<div style="left:769.2px;top:693.5px;width:1.6px;height:1.6px;background:#444"></div>
<div style="left:781px;top:684px;width:476px;height:14px;background:#f9f9f9;border-radius:7px"></div>
<svg style="position:absolute;left:783.5px;top:687.5px;" width="5.5" height="7.5" viewBox="0 0 5.5 7.5"><path d="M5 0.5V7L0.5 3.75z" fill="#6a6a6a"/></svg>
<div style="left:792px;top:687.8px;width:452.4px;height:7px;background:#737373;border-radius:3.5px"></div>
<svg style="position:absolute;left:1259px;top:687.5px;" width="5.5" height="7.5" viewBox="0 0 5.5 7.5"><path d="M0.5 0.5V7L5 3.75z" fill="#6a6a6a"/></svg>
<div style="left:0px;top:702.8px;width:1280px;height:17.2px;background:#f3f3f3"></div>
<div style="left:0px;top:719px;width:1280px;height:1px;background:#8c8c8c"></div>
<div class="t" style="left:7.50px;top:708.54px;font-size:8.58px;line-height:8.58px;color:#2a2a2a;transform:scaleX(0.8622);transform-origin:0 0;">Select destination and press ENTER or choose Paste</div>
<div style="left:1079.8px;top:703.5px;width:26.2px;height:15.5px;background:#e3e3e3"></div>
<svg style="position:absolute;left:1088px;top:705.8px;" width="10" height="10" viewBox="0 0 10 10"><rect x="0.6" y="0.6" width="8.8" height="8.8" rx="1" fill="none" stroke="#444" stroke-width="1.1"/><path d="M3.5 0.6v8.8M6.5 0.6v8.8M0.6 3.5h8.8M0.6 6.5h8.8" stroke="#444" stroke-width="1"/></svg>
<svg style="position:absolute;left:1115px;top:705.8px;" width="10" height="10" viewBox="0 0 10 10"><rect x="0.6" y="0.6" width="8.8" height="8.8" rx="1" fill="none" stroke="#555" stroke-width="1.1"/><rect x="2.8" y="2.5" width="4.4" height="5" fill="none" stroke="#555" stroke-width="0.9"/></svg>
<svg style="position:absolute;left:1142px;top:705.8px;" width="10" height="10" viewBox="0 0 10 10"><path d="M0.6 0.6h8.8v8.8H0.6zM3.5 0.6v4h6" fill="none" stroke="#555" stroke-width="1.1"/></svg>
<div style="left:1164px;top:710.5px;width:5px;height:1.3px;background:#666"></div>
<div style="left:1172.7px;top:711px;width:66.5px;height:1px;background:#777"></div>
<div style="left:1204.5px;top:708px;width:3.5px;height:7.5px;background:#555;border-radius:0.5px"></div>
<svg style="position:absolute;left:1242.5px;top:708px;" width="6" height="6" viewBox="0 0 6 6"><path d="M3 0.3v5.4M0.3 3h5.4" stroke="#666" stroke-width="1"/></svg>
<div class="t" style="left:1257.00px;top:707.61px;font-size:8.14px;line-height:8.14px;color:#444;transform:scaleX(0.8406);transform-origin:0 0;">100%</div>
</body></html>
